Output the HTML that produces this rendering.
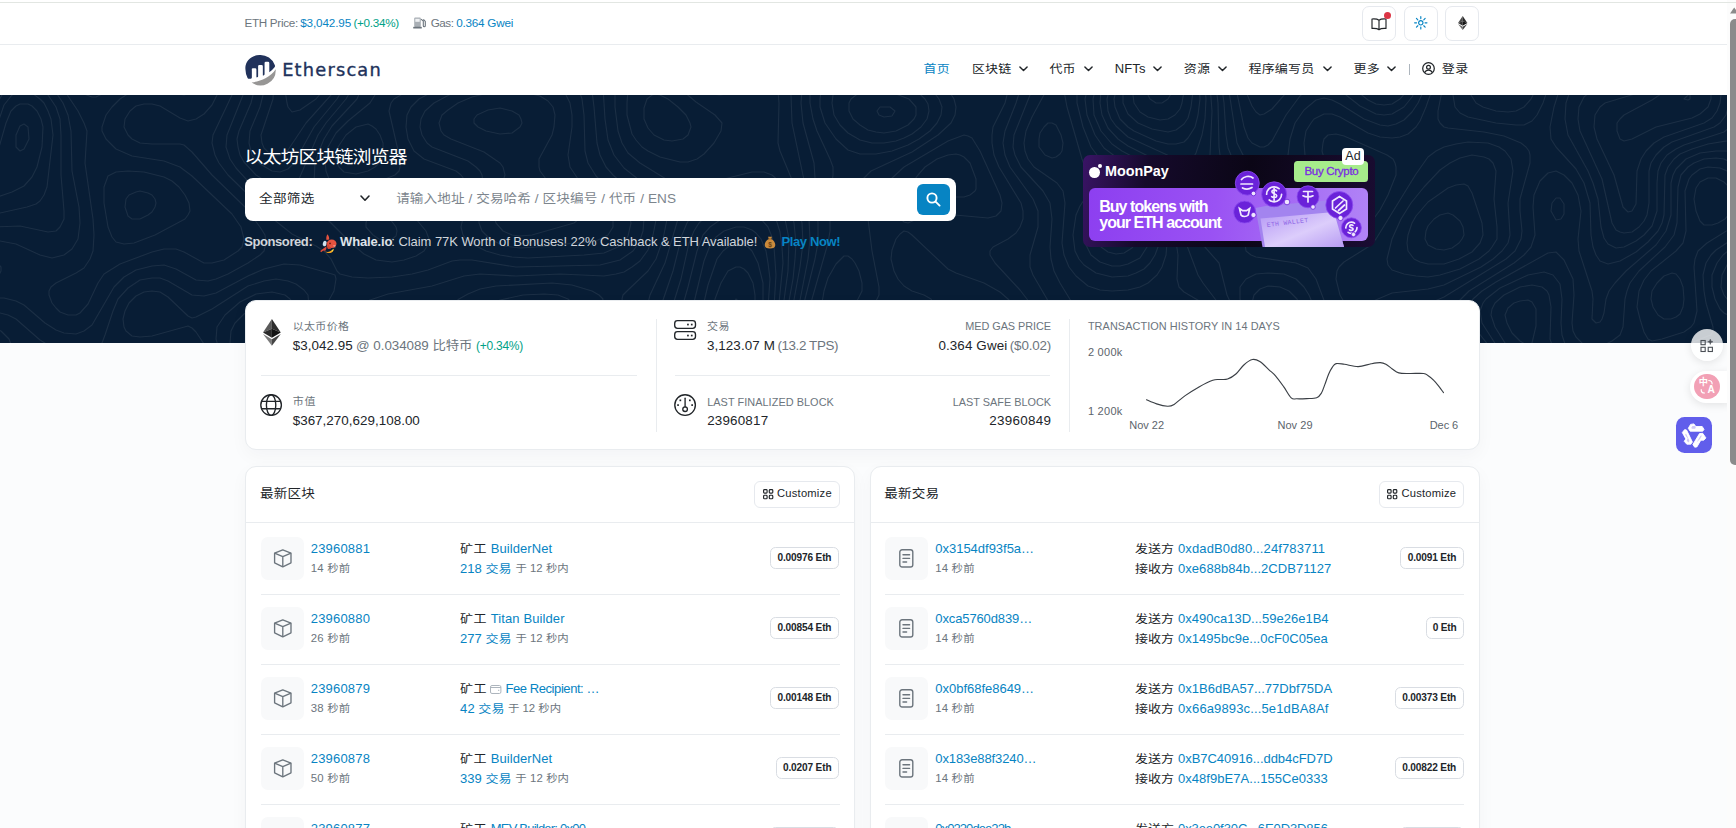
<!DOCTYPE html>
<html lang="zh-CN">
<head>
<meta charset="utf-8">
<title>以太坊区块链浏览器 | Etherscan</title>
<style>
*{box-sizing:border-box;margin:0;padding:0}
html,body{width:1736px;height:828px;overflow:hidden;background:#fbfcfd}
body{position:relative;font-family:"Liberation Sans","Noto Sans CJK SC",sans-serif;font-size:13px;color:#212529;line-height:1}
.abs{position:absolute}
.c{display:inline-block;font-style:normal;transform:scaleY(.9);transform-origin:50% 67%}
.t{position:absolute;white-space:nowrap;line-height:1;font-family:"Liberation Sans","Noto Sans CJK SC",sans-serif}
svg{position:absolute;overflow:visible}
#topline{left:0;top:2px;width:1736px;height:1px;background:#e2e6e2;z-index:2}
#topbar{left:0;top:0;width:1727px;height:45px;background:#fff;border-bottom:1px solid #e9ecef}
#navbar{left:0;top:45px;width:1727px;height:50px;background:#fff}
.tbtn{position:absolute;top:6px;width:34px;height:35px;border:1px solid #e6e9ee;border-radius:7px;background:#fff}
#hero{left:0;top:95px;width:1727px;height:248px;background:#081d35;overflow:hidden}
#search{left:245px;top:178px;width:711px;height:43.3px;background:#fff;border-radius:8px}
#sbtn{left:917px;top:184px;width:33px;height:31px;background:#0784c3;border-radius:6px}
.card{position:absolute;background:#fff;border:1px solid #e9ecef;border-radius:11px;box-shadow:0 6px 18px rgba(8,29,53,.035)}
.hr{position:absolute;height:1px;background:#e9ecef}
.vr{position:absolute;width:1px;background:#e9ecef}
.ibox{position:absolute;width:43px;height:43px;background:#f8f9fa;border-radius:7px}
.badge{position:absolute;height:22px;border:1px solid #d9dde3;border-radius:5.5px;font-size:10.1px;font-weight:bold;color:#212529;line-height:19px;text-align:center;white-space:nowrap;background:#fff;letter-spacing:-.15px}
.cust{position:absolute;top:481px;width:85.5px;height:26.5px;border:1px solid #e6e9ee;border-radius:6px;background:#fff}
#sbar{left:1727px;top:0;width:9px;height:828px;background:#fcfcfc}
#thumb{left:1730px;top:18.5px;width:12px;height:446px;background:#8b8b8b;border-radius:5px}
</style>
</head>
<body>
<div id="topline" class="abs"></div>
<div id="topbar" class="abs"></div>
<div id="navbar" class="abs"></div>

<!-- gas pump -->
<svg style="left:412.5px;top:17px" width="13" height="12" viewBox="0 0 13 12"><rect x="1.2" y="0.6" width="6.6" height="9.4" rx="1" fill="#a9afb5"/><rect x="2.3" y="1.8" width="4.4" height="3" fill="#eef0f2"/><rect x="0.2" y="9.8" width="8.6" height="1.7" rx=".5" fill="#6c757d"/><path d="M8 2.2l2.3 1.9v4.6a1 1 0 0 0 2 0V4.5L10.4 2.4" fill="none" stroke="#6c757d" stroke-width="1.1"/></svg>

<!-- top right buttons -->
<div class="tbtn" style="left:1362px"></div>
<div class="tbtn" style="left:1404px"></div>
<div class="tbtn" style="left:1445px"></div>
<svg style="left:1370.5px;top:17.5px" width="16" height="13" viewBox="0 0 16 13" fill="none" stroke="#212529" stroke-width="1.150" stroke-linejoin="round"><path d="M8 2.2C6.4 1 3.6.8 1 1v9.4c2.6-.2 5.4 0 7 1.3 1.6-1.3 4.4-1.5 7-1.3V1c-2.6-.2-5.4 0-7 1.2zM8 2.2v9.4"/></svg>
<div class="abs" style="left:1383.8px;top:11.8px;width:7.2px;height:7.2px;border-radius:50%;background:#dc3545"></div>
<svg style="left:1413.700px;top:16.300px" width="13.600" height="13.600" viewBox="-7.5 -7.5 15 15" fill="none" stroke="#0784c3" stroke-width="1.300" stroke-linecap="round"><circle r="2.4"/><path d="M0-4.7V-6.8M0 4.7V6.8M-4.7 0H-6.8M4.7 0H6.8M-3.3-3.3L-4.8-4.8M3.3-3.3L4.8-4.8M-3.3 3.3L-4.8 4.8M3.3 3.3L4.8 4.8"/></svg>
<svg style="left:1458px;top:16.4px" width="9.4" height="14" viewBox="0 0 18 27"><path d="M9 0L0 13.6 9 10z" fill="#4a4a4a"/><path d="M9 0l9 13.6L9 10z" fill="#2b2b2b"/><path d="M0 13.6L9 10v8.9z" fill="#2f2f2f"/><path d="M18 13.6L9 10v8.9z" fill="#141414"/><path d="M0 15.2l9 5.3V27z" fill="#6b6b6b"/><path d="M18 15.2l-9 5.3V27z" fill="#3d3d3d"/></svg>

<!-- logo -->
<svg style="left:245.2px;top:54.700px" width="31.1" height="30.4" viewBox="0 0 293.775 293.671"><path fill="#21325b" d="M61.055,139.819a12.45,12.45,0,0,1,12.508-12.452l20.737.068a12.467,12.467,0,0,1,12.467,12.467v78.414c2.336-.692,5.332-1.43,8.614-2.203a10.389,10.389,0,0,0,8.009-10.11V108.735a12.469,12.469,0,0,1,12.467-12.47h20.779a12.47,12.47,0,0,1,12.467,12.47v90.276s5.2-2.106,10.269-4.245a10.408,10.408,0,0,0,6.353-9.577V77.567a12.466,12.466,0,0,1,12.466-12.467h20.779a12.468,12.468,0,0,1,12.467,12.467v88.625c18.014-13.055,36.271-28.758,50.759-47.639a20.926,20.926,0,0,0,3.185-19.537A146.6,146.6,0,0,0,136.337,0C54.996,0-12.181,66.391,1.86,147.716a146.1,146.1,0,0,0,19.5,73.45,18.56,18.56,0,0,0,17.707,9.173c3.931-.346,8.825-.835,14.643-1.518a10.383,10.383,0,0,0,9.209-10.306V139.819"/><path fill="#979695" d="M60.603,265.577A146.808,146.808,0,0,0,293.775,146.838c0-3.381-.157-6.724-.383-10.049-53.642,80-152.686,117.405-232.79,128.793"/></svg>

<!-- nav chevrons -->
<svg class="chev" style="left:1018.7px;top:65.8px" width="9" height="6" viewBox="0 0 9 6" fill="none" stroke="#212529" stroke-width="1.45" stroke-linecap="round" stroke-linejoin="round"><path d="M.9.9l3.6 3.7L8.1.9"/></svg>
<svg class="chev" style="left:1083.7px;top:65.8px" width="9" height="6" viewBox="0 0 9 6" fill="none" stroke="#212529" stroke-width="1.45" stroke-linecap="round" stroke-linejoin="round"><path d="M.9.9l3.6 3.7L8.1.9"/></svg>
<svg class="chev" style="left:1153px;top:65.8px" width="9" height="6" viewBox="0 0 9 6" fill="none" stroke="#212529" stroke-width="1.45" stroke-linecap="round" stroke-linejoin="round"><path d="M.9.9l3.6 3.7L8.1.9"/></svg>
<svg class="chev" style="left:1218.2px;top:65.8px" width="9" height="6" viewBox="0 0 9 6" fill="none" stroke="#212529" stroke-width="1.45" stroke-linecap="round" stroke-linejoin="round"><path d="M.9.9l3.6 3.7L8.1.9"/></svg>
<svg class="chev" style="left:1322.5px;top:65.8px" width="9" height="6" viewBox="0 0 9 6" fill="none" stroke="#212529" stroke-width="1.45" stroke-linecap="round" stroke-linejoin="round"><path d="M.9.9l3.6 3.7L8.1.9"/></svg>
<svg class="chev" style="left:1387.3px;top:65.8px" width="9" height="6" viewBox="0 0 9 6" fill="none" stroke="#212529" stroke-width="1.45" stroke-linecap="round" stroke-linejoin="round"><path d="M.9.9l3.6 3.7L8.1.9"/></svg>
<div class="abs" style="left:1409px;top:64px;width:1px;height:11px;background:#adb5bd"></div>
<svg style="left:1422px;top:62.4px" width="13" height="13" viewBox="0 0 13 13" fill="none" stroke="#212529" stroke-width="1.25"><circle cx="6.5" cy="6.5" r="5.8"/><circle cx="6.5" cy="5.2" r="1.9"/><path d="M2.8 10.6c.7-1.7 2-2.5 3.7-2.5s3 .8 3.7 2.5"/></svg>

<!-- hero -->
<div id="hero" class="abs"><svg class="abs" style="left:0;top:0" width="1727" height="248" viewBox="0 0 1727 248" fill="none" stroke="#ffffff" stroke-opacity=".08" stroke-width="1.15" stroke-linejoin="round"><path d="M737,216 740,212 740,208 736,204 733,208 732,212 734,216 736,217 737,216 M740,236 748,229 752,223 755,212 755,200 753,188 748,178 744,174 740,172 736,172 728,176 721,188 715,204 713,220 716,230 723,236 732,238 740,236 M729,248 736,247 744,244 752,237 760,224 763,208 763,188 758,168 752,156 748,152 740,149 732,150 728,152 723,156 717,164 708,190 701,220 702,232 706,240 716,246 729,248 M725,256 736,255 744,252 755,244 760,237 764,229 768,212 770,184 768,168 766,156 761,144 756,138 752,135 744,132 736,132 724,136 716,142 711,148 704,166 690,224 690,232 691,240 697,248 708,254 725,256 M-80,38 -68,36 -60,34 -52,29 -48,24 -44,16 -38,-12 -33,-24 -24,-43 -12,-60 0,-68 32,-76 37,-80 M741,260 748,257 756,251 762,244 767,236 771,224 774,212 776,180 774,152 772,142 768,132 760,123 752,119 744,119 732,120 720,125 710,132 703,140 697,156 688,192 680,220 678,232 679,240 682,248 688,255 696,259 708,262 720,263 732,262 741,260 M-80,44 -68,43 -56,40 -49,36 -44,32 -37,20 -31,-8 -25,-24 -16,-39 -8,-47 4,-54 20,-57 36,-58 64,-56 72,-56 76,-58 80,-64 82,-80 M1162,8 1168,4 1172,-3 1173,-8 1172,-26 1168,-37 1164,-36 1156,-26 1150,-16 1147,-8 1148,0 1150,4 1156,8 1162,8 M733,268 744,265 752,261 764,251 769,244 774,232 779,208 783,168 782,152 780,137 776,124 771,116 764,109 756,107 740,107 722,112 708,119 699,128 694,136 689,148 681,184 671,216 668,228 668,240 670,248 675,256 684,263 692,267 704,269 720,269 733,268 M-80,50 -68,49 -56,47 -48,43 -40,37 -32,24 -24,-8 -19,-20 -8,-35 4,-43 12,-46 24,-47 44,-45 60,-38 84,-21 94,-20 103,-24 120,-39 128,-43 136,-43 160,-39 168,-40 176,-42 184,-48 196,-61 203,-72 205,-80 M1160,-80 1158,-64 1154,-48 1136,-12 1133,0 1134,8 1140,17 1148,22 1160,25 1168,24 1175,20 1180,14 1182,8 1184,-4 1184,-44 1188,-80 M683,44 688,40 691,32 690,28 686,20 678,12 668,4 660,-0 656,-1 652,0 647,4 644,13 644,24 648,33 654,40 664,45 672,46 683,44 M741,272 752,267 760,262 768,254 774,244 782,220 788,176 789,144 784,119 780,109 773,100 768,96 760,93 744,94 716,102 704,109 692,120 687,128 682,140 673,176 662,208 658,224 658,240 662,252 668,262 676,268 688,273 704,275 724,275 741,272 M140,124 148,120 152,117 155,112 156,108 155,104 152,100 148,98 140,96 136,97 129,100 126,104 125,112 128,121 132,124 140,124 M1532,248 1536,231 1536,214 1532,207 1528,205 1520,206 1514,208 1508,213 1505,220 1507,228 1512,238 1520,246 1528,251 1532,248 M521,236 532,232 540,228 544,224 545,220 544,217 540,215 532,214 524,216 516,220 511,224 509,228 509,232 514,236 521,236 M-80,55 -64,54 -52,52 -44,48 -36,42 -31,36 -27,28 -18,-4 -13,-16 -4,-28 8,-35 24,-38 36,-37 44,-35 52,-30 60,-24 84,-1 92,2 96,2 104,-2 120,-14 132,-19 144,-21 172,-20 184,-24 192,-32 212,-62 217,-72 219,-80 M1153,-80 1151,-64 1148,-52 1143,-40 1125,-8 1123,0 1123,8 1128,19 1138,28 1152,34 1168,37 1176,35 1184,29 1188,23 1191,12 1193,-4 1191,-40 1195,-80 M697,64 704,59 714,48 721,36 722,28 715,20 696,7 683,-4 656,-36 652,-38 648,-38 644,-36 636,-26 631,-16 628,-5 627,8 627,20 632,39 636,45 642,52 648,56 660,62 680,67 688,67 697,64 M134,148 155,140 185,124 188,120 190,116 189,108 185,100 179,92 172,86 164,82 144,77 128,76 116,77 108,81 104,92 104,108 108,132 112,142 116,147 124,149 134,148 M731,280 744,277 756,271 768,262 776,252 781,240 785,228 793,184 795,164 796,148 794,128 791,112 787,100 780,87 772,80 764,77 752,77 712,87 700,93 692,101 684,112 678,124 665,168 650,200 647,212 647,228 651,248 657,260 664,269 676,276 692,281 712,282 731,280 M1718,128 1725,124 1732,116 1733,108 1732,100 1729,92 1724,87 1716,83 1708,83 1700,87 1696,93 1694,104 1696,116 1700,126 1704,130 1712,130 1718,128 M1671,224 1676,222 1680,219 1683,212 1684,204 1683,192 1680,184 1676,179 1672,178 1664,181 1657,188 1652,196 1651,204 1653,212 1658,220 1664,224 1671,224 M1654,324 1653,304 1649,288 1644,277 1636,270 1628,268 1620,268 1592,275 1580,276 1568,272 1560,266 1554,256 1550,244 1551,212 1549,200 1547,196 1542,192 1532,190 1520,192 1504,200 1495,208 1492,214 1491,220 1495,232 1515,264 1538,304 1542,316 1544,324 M515,324 510,284 511,276 513,268 518,260 523,256 554,236 564,228 571,220 572,216 573,212 572,208 568,204 558,200 544,199 523,200 500,205 486,212 479,220 475,228 473,236 470,264 463,304 462,324 M-80,61 -64,60 -52,58 -44,55 -36,50 -30,44 -24,36 -12,-3 -4,-17 4,-24 12,-28 24,-30 36,-28 48,-22 62,-8 78,16 84,28 87,36 85,68 93,124 94,140 93,156 90,164 84,173 76,178 56,188 51,192 49,196 49,200 52,208 56,213 60,217 68,220 76,220 80,218 88,209 98,188 104,179 120,169 152,157 164,154 176,154 184,157 204,168 212,168 224,165 238,156 242,152 244,144 241,132 232,119 192,81 180,72 164,66 132,61 116,54 106,44 102,36 102,32 106,20 112,12 120,4 132,-4 140,-6 152,-6 184,-0 192,-2 196,-4 202,-12 213,-40 226,-64 229,-72 231,-80 M633,-80 630,-60 619,-28 615,-12 615,12 618,36 622,48 628,58 640,68 666,84 672,92 672,100 663,144 656,164 648,176 627,196 623,200 622,204 623,208 635,228 648,260 657,272 668,280 679,284 692,287 708,288 732,286 752,279 768,269 780,255 786,244 789,232 800,172 803,148 802,128 795,92 780,56 778,48 779,8 778,-4 776,-12 772,-17 768,-19 764,-19 756,-16 732,-2 720,0 712,-1 700,-6 692,-12 684,-20 675,-36 668,-56 665,-80 M1148,-80 1146,-64 1141,-48 1119,-12 1116,-4 1114,4 1115,12 1120,24 1128,32 1134,36 1156,46 1168,49 1176,49 1184,47 1188,43 1195,32 1198,20 1200,4 1197,-40 1201,-80 M1662,244 1684,237 1691,232 1694,228 1697,216 1694,172 1695,164 1698,156 1707,148 1733,132 1740,126 1743,120 1745,108 1740,91 1732,80 1727,76 1720,73 1708,72 1700,74 1692,80 1689,84 1685,96 1686,136 1683,148 1676,156 1651,176 1644,185 1639,196 1637,212 1640,224 1644,237 1648,244 1652,246 1662,244 M-80,216 -60,213 -37,204 -5,184 -1,180 1,176 1,172 -6,164 -38,144 -60,133 -80,130 M1659,324 1656,287 1652,268 1648,257 1644,253 1640,252 1600,263 1588,264 1580,263 1572,258 1566,252 1562,240 1561,228 1562,204 1560,189 1553,180 1544,177 1528,180 1500,193 1486,204 1483,208 1480,216 1482,228 1505,264 1521,296 1528,312 1530,324 M522,324 521,288 523,276 527,268 540,256 581,228 595,216 602,208 603,204 599,200 592,196 572,190 552,188 496,191 480,194 468,199 459,204 449,212 442,220 441,224 441,228 451,252 455,272 455,324 M1281,220 1280,215 1276,213 1272,215 1273,220 1276,224 1280,223 1281,220 M360,260 375,252 386,244 400,232 402,228 396,224 380,225 356,230 343,236 336,243 334,248 333,252 336,258 340,261 344,262 352,262 360,260 M943,324 947,280 947,272 944,264 936,258 920,250 904,245 888,242 876,244 868,248 860,255 853,264 850,272 847,284 846,324 M-80,223 -56,220 -16,206 -4,203 4,203 16,206 24,210 45,228 56,235 64,238 76,239 84,236 92,230 114,192 124,182 136,175 152,171 164,170 176,174 196,185 208,186 216,184 228,179 248,168 260,160 264,156 266,148 265,140 260,132 245,112 212,80 192,57 184,50 180,49 152,49 140,48 132,44 128,40 124,32 125,24 130,16 136,11 144,9 152,9 160,11 180,23 188,26 196,24 204,19 212,10 217,0 225,-36 237,-64 241,-80 M618,-80 615,-64 606,-36 603,-24 603,-8 605,24 608,45 614,60 624,73 648,92 652,97 655,104 657,120 653,140 648,155 640,166 632,172 624,177 616,179 604,181 560,179 516,181 480,179 464,181 432,191 388,199 364,207 348,214 336,222 328,231 322,240 320,252 322,260 328,268 340,273 356,272 396,258 408,255 420,254 432,259 440,268 445,280 448,296 449,324 M529,324 529,292 532,280 536,272 543,264 556,254 584,238 600,230 612,229 620,232 628,240 641,264 652,277 668,287 688,293 700,294 716,294 732,292 744,289 756,284 768,276 777,268 784,260 790,248 794,236 808,164 810,144 809,124 804,85 792,28 791,0 792,-24 794,-36 798,-44 816,-68 821,-80 M1143,-80 1141,-64 1135,-48 1114,-16 1109,-4 1107,4 1108,16 1111,24 1116,31 1128,42 1176,64 1188,67 1192,65 1196,58 1202,40 1205,24 1206,4 1203,-36 1206,-80 M1480,-80 1478,-60 1470,-16 1469,-8 1471,0 1476,8 1483,12 1496,16 1508,17 1516,16 1524,12 1531,4 1537,-8 1543,-24 1546,-40 1547,-80 M-80,66 -52,64 -40,60 -32,55 -25,48 -20,40 -8,4 0,-10 8,-17 16,-21 24,-22 36,-19 48,-12 55,-4 63,8 68,20 71,36 72,76 79,112 80,128 78,144 72,154 64,160 52,163 40,160 16,149 -16,143 -60,127 -80,123 M368,76 375,72 379,68 382,64 383,56 383,48 380,40 376,34 372,31 368,29 364,30 356,32 346,40 338,52 336,64 339,72 344,77 356,79 368,76 M970,100 975,96 976,94 976,84 970,68 964,62 960,60 956,59 948,60 937,64 925,72 918,80 915,84 914,88 916,93 920,97 928,100 952,102 964,102 970,100 M1663,324 1662,280 1663,272 1665,264 1668,260 1676,254 1708,241 1711,240 1713,236 1713,232 1706,208 1704,196 1703,180 1706,168 1711,160 1716,155 1748,134 1753,128 1755,124 1756,116 1755,108 1749,92 1744,80 1737,72 1732,68 1724,64 1716,63 1704,64 1694,68 1688,72 1681,80 1678,92 1677,128 1674,140 1665,152 1639,176 1630,188 1627,196 1625,204 1623,232 1620,240 1612,246 1604,250 1592,251 1584,250 1576,242 1573,236 1572,228 1574,200 1573,184 1564,165 1556,157 1548,158 1496,187 1482,196 1473,204 1469,212 1468,216 1469,224 1474,232 1493,256 1502,272 1516,304 1520,324 M1561,124 1564,119 1564,109 1560,103 1556,103 1552,108 1551,116 1556,125 1561,124 M1292,252 1296,250 1300,244 1303,232 1302,216 1297,204 1289,196 1280,192 1268,191 1260,194 1254,200 1252,208 1254,220 1260,232 1268,243 1276,250 1284,253 1292,252 M949,324 950,312 953,296 957,284 963,272 972,264 997,252 1002,248 1006,240 1007,236 1005,228 1001,220 992,212 980,208 972,210 968,212 964,217 952,236 944,241 932,242 900,234 888,233 872,237 860,244 849,256 843,272 841,288 842,324 M599,-80 597,-68 590,-48 588,-36 594,12 597,48 600,60 606,72 613,80 635,100 642,112 644,124 643,136 639,148 633,156 620,165 600,170 516,172 472,165 460,165 452,166 428,175 412,179 392,182 368,183 352,182 340,179 337,176 331,164 324,156 316,151 292,139 272,123 228,80 219,68 215,60 212,48 213,40 232,0 237,-36 247,-64 250,-80 M364,-80 367,-56 375,-12 375,0 370,8 348,26 336,38 328,52 325,64 326,76 329,84 336,89 348,92 364,90 385,84 395,80 399,76 400,72 400,64 389,16 391,8 394,4 404,-2 418,-8 468,-26 511,-40 524,-46 533,-52 540,-60 542,-68 544,-80 M536,324 537,292 540,284 544,276 552,267 564,258 580,249 596,243 608,242 616,245 624,253 640,276 648,284 664,293 688,300 712,301 736,298 756,290 777,276 789,264 797,248 805,204 815,164 818,148 818,128 814,68 803,28 801,8 803,-16 809,-32 816,-41 824,-47 832,-50 840,-51 848,-48 873,-36 888,-31 908,-26 956,-19 968,-13 980,-1 984,-1 988,-5 991,-16 991,-40 995,-80 M1139,-80 1136,-64 1132,-52 1124,-38 1107,-16 1101,-4 1100,8 1102,20 1108,33 1118,44 1128,51 1156,65 1171,76 1180,88 1192,114 1200,126 1208,133 1216,136 1224,135 1232,128 1236,120 1236,112 1232,100 1213,72 1210,60 1212,16 1208,-36 1210,-80 M1459,-80 1460,-48 1459,-32 1453,0 1455,12 1460,18 1468,22 1496,28 1516,30 1524,30 1532,26 1537,20 1543,8 1551,-16 1558,-40 1561,-60 1562,-80 M-80,73 -60,71 -48,69 -36,65 -28,61 -20,53 -15,44 -4,11 4,-4 9,-8 16,-12 24,-13 32,-12 40,-8 48,0 56,12 60,24 61,40 61,80 64,116 64,124 60,132 56,136 48,137 20,131 -8,132 -20,131 -60,119 -80,116 M917,124 932,120 944,119 988,123 996,121 1001,116 1002,108 1000,100 980,56 972,43 968,41 964,40 948,46 904,72 891,84 888,88 887,96 888,104 892,113 896,119 904,127 908,128 917,124 M1800,178 1768,208 1752,219 1740,222 1732,222 1724,218 1720,214 1715,204 1712,192 1712,180 1717,168 1723,160 1728,156 1744,148 1767,140 1772,136 1773,132 1769,120 1753,80 1744,64 1736,58 1728,56 1716,56 1700,58 1686,64 1676,74 1673,80 1671,88 1671,120 1666,136 1656,150 1626,176 1615,188 1609,196 1606,204 1604,218 1602,224 1600,227 1596,228 1592,224 1593,204 1592,196 1579,156 1578,144 1581,116 1578,100 1572,88 1564,80 1556,76 1548,78 1540,86 1534,100 1533,112 1535,140 1531,152 1524,160 1514,168 1469,196 1457,208 1453,216 1453,220 1457,228 1480,250 1488,260 1495,272 1507,300 1510,312 1512,324 M442,108 445,104 446,100 444,94 436,90 428,90 425,92 424,96 428,104 436,109 442,108 M955,324 956,312 959,300 964,290 968,284 980,275 1014,260 1022,252 1025,240 1023,228 1015,212 1008,204 1000,197 984,188 956,178 948,174 912,140 908,137 904,136 900,139 896,144 892,155 891,164 894,176 898,184 904,191 912,196 924,200 931,204 933,208 933,216 930,220 924,222 900,219 888,221 880,223 860,233 847,244 839,256 835,272 837,324 M-80,230 -56,227 -16,218 0,218 8,220 16,224 40,245 48,250 64,254 88,254 96,252 102,248 105,240 113,216 118,204 128,193 140,185 152,183 160,183 168,186 192,200 204,201 216,198 248,181 264,174 284,169 300,170 332,179 335,180 336,184 334,196 316,229 311,244 311,252 312,260 316,267 320,272 332,279 344,281 356,279 400,268 412,267 420,269 430,276 438,288 441,304 443,324 M1334,324 1336,288 1335,276 1333,268 1322,248 1314,212 1309,200 1304,192 1296,184 1284,179 1268,178 1256,179 1246,184 1240,192 1240,204 1244,220 1252,236 1281,284 1283,296 1280,324 M357,-80 363,-28 362,-8 357,4 332,31 324,44 319,56 315,68 314,88 316,96 320,105 324,110 328,111 336,110 368,101 380,100 388,101 396,104 406,112 426,136 429,144 429,148 424,156 416,161 404,165 392,167 376,165 364,159 352,149 324,121 320,119 296,117 288,115 276,108 246,84 236,73 230,64 226,52 227,40 243,0 248,-36 256,-67 258,-80 M1115,324 1111,300 1106,288 1101,280 1096,274 1088,268 1056,257 1049,252 1045,244 1036,220 1030,208 1020,195 995,168 990,160 990,156 993,152 1008,144 1016,138 1020,132 1023,124 1023,116 1021,108 999,72 994,60 992,48 992,40 993,32 1005,8 1009,-8 1011,-80 M1134,-80 1132,-64 1127,-52 1120,-41 1100,-16 1096,-8 1093,4 1094,20 1101,36 1112,49 1122,56 1152,72 1165,84 1173,96 1188,128 1196,142 1219,168 1227,200 1251,252 1256,264 1259,276 1259,288 1256,296 1243,316 1239,324 M1429,-80 1432,-72 1444,-52 1447,-40 1446,-24 1438,16 1438,24 1440,28 1444,32 1448,33 1484,37 1504,41 1521,48 1526,52 1529,56 1530,60 1530,68 1520,104 1520,116 1522,136 1521,144 1515,156 1506,164 1444,202 1428,209 1404,212 1392,215 1380,222 1364,234 1352,238 1344,237 1340,235 1334,228 1328,216 1316,184 1308,173 1296,168 1256,162 1251,160 1246,156 1245,148 1252,120 1251,108 1245,96 1224,69 1220,60 1219,52 1218,8 1213,-36 1215,-80 M1738,-80 1738,-28 1741,-8 1748,32 1748,40 1739,44 1708,49 1692,54 1680,59 1674,64 1668,72 1665,80 1664,120 1662,128 1658,136 1648,147 1636,157 1620,166 1608,169 1600,166 1596,160 1593,152 1591,140 1590,108 1584,88 1576,74 1556,52 1551,44 1550,32 1554,12 1564,-20 1572,-36 1576,-40 1580,-41 1584,-41 1608,-29 1624,-25 1640,-26 1652,-33 1660,-41 1665,-52 1668,-64 1669,-80 M544,324 546,296 548,288 552,280 559,272 568,265 580,259 592,255 604,254 612,257 620,264 636,285 652,296 680,306 704,310 724,309 736,306 748,301 777,284 799,264 805,256 808,248 812,204 828,148 830,136 830,104 833,80 833,72 830,64 817,36 813,24 810,8 810,-4 814,-16 820,-26 828,-32 840,-36 852,-34 926,-16 938,-12 949,-4 954,4 956,12 955,20 951,28 938,40 912,57 871,76 863,84 862,88 862,96 868,124 872,156 879,192 879,200 875,208 872,212 848,230 837,240 831,248 827,256 825,268 831,304 832,324 M584,160 528,163 512,162 500,160 486,156 476,151 466,144 463,140 461,132 468,100 467,88 461,80 456,76 424,64 414,56 408,44 406,32 407,20 411,12 419,4 434,-4 464,-16 484,-22 532,-30 548,-32 560,-30 568,-25 576,-14 582,4 584,20 585,56 588,68 596,81 624,110 629,120 631,128 628,141 624,147 618,152 604,158 584,160 M-80,81 -60,80 -44,76 -28,70 -20,64 -13,56 -9,48 4,10 12,0 20,-3 24,-4 32,-2 40,4 44,8 48,16 51,24 53,40 47,92 44,100 40,106 36,109 27,112 0,118 -16,120 -28,119 -64,109 -80,107 M1359,136 1364,133 1372,126 1380,115 1388,100 1396,80 1396,72 1395,68 1393,64 1387,60 1344,41 1336,39 1328,40 1324,44 1323,48 1322,56 1331,88 1334,128 1336,132 1339,136 1344,138 1352,138 1359,136 M1748,209 1736,210 1732,208 1727,204 1724,200 1721,192 1722,180 1728,168 1736,162 1748,158 1760,158 1768,162 1772,167 1774,172 1774,180 1771,188 1766,196 1757,204 1748,209 M220,324 220,296 217,276 208,255 196,237 192,233 188,231 152,241 140,242 132,241 126,236 124,232 123,224 125,216 129,208 136,201 144,197 152,196 160,197 168,202 188,221 192,223 196,222 212,214 248,191 264,186 276,184 288,186 296,189 304,195 308,200 309,212 303,240 303,252 304,260 307,268 316,278 328,285 340,287 356,286 396,277 408,277 416,280 424,285 431,296 435,308 436,324 M-80,238 -60,237 -24,232 -12,232 1,236 9,244 12,252 10,260 -12,279 -23,292 -29,308 -31,324 M1344,324 1346,308 1350,292 1355,280 1362,272 1372,266 1400,256 1432,238 1440,237 1452,239 1464,245 1476,255 1484,264 1491,276 1498,292 1503,308 1505,324 M349,-80 355,-28 354,-16 353,-8 346,4 326,28 318,40 299,84 292,91 284,93 272,90 256,80 244,67 240,60 238,52 237,44 239,36 251,8 254,-4 257,-36 264,-68 266,-80 M1127,324 1126,312 1122,300 1112,276 1100,262 1070,244 1062,236 1047,204 1033,180 1030,172 1030,160 1038,132 1038,116 1033,104 1010,72 1005,60 1003,48 1005,36 1016,8 1021,-8 1023,-24 1024,-80 M1130,-80 1127,-64 1122,-52 1113,-40 1095,-20 1088,-8 1085,4 1087,20 1095,40 1104,53 1116,62 1148,79 1156,86 1164,96 1171,108 1177,124 1198,180 1203,188 1228,221 1242,248 1247,268 1248,276 1246,284 1240,296 1220,316 1215,324 M1415,-80 1419,-68 1432,-48 1435,-40 1437,-32 1436,-20 1433,-8 1426,12 1420,26 1416,32 1408,39 1400,42 1392,43 1380,42 1368,38 1340,22 1332,19 1324,19 1314,24 1311,28 1306,36 1304,48 1305,60 1315,92 1316,100 1314,112 1310,128 1304,138 1296,144 1288,146 1280,145 1273,140 1270,132 1268,112 1263,100 1258,92 1236,69 1231,60 1228,53 1226,40 1224,8 1218,-36 1219,-80 M1733,-80 1732,-32 1736,12 1736,20 1733,28 1730,32 1724,37 1684,50 1676,54 1667,60 1661,68 1658,76 1657,88 1657,116 1652,131 1644,140 1636,146 1624,152 1616,153 1608,149 1604,143 1601,132 1598,104 1593,88 1588,76 1568,40 1565,24 1566,8 1570,-4 1575,-12 1580,-18 1584,-20 1592,-21 1616,-17 1632,-17 1644,-20 1656,-27 1665,-36 1671,-48 1673,-60 1674,-80 M892,56 876,59 860,59 848,55 836,44 825,28 820,12 820,4 821,-4 824,-11 828,-16 836,-22 844,-24 864,-23 914,-12 928,-6 936,0 939,4 942,12 941,20 937,28 930,36 919,44 908,50 892,56 M536,152 520,153 504,151 490,144 482,136 479,128 479,120 483,88 482,80 480,76 476,72 468,66 432,52 427,48 422,40 420,32 421,24 425,16 434,8 449,0 469,-8 484,-12 504,-15 528,-16 544,-15 556,-11 564,-4 570,8 572,20 572,32 568,60 570,72 578,84 603,108 609,116 613,124 613,132 608,140 596,146 536,152 M-8,104 -20,106 -32,105 -43,100 -47,96 -45,92 -24,81 -12,72 -6,64 -2,56 6,28 11,16 16,11 20,9 28,9 32,11 37,16 41,24 43,32 42,52 37,72 32,82 24,91 12,97 -8,104 M1356,212 1348,210 1344,207 1340,200 1336,184 1337,176 1339,172 1344,167 1368,152 1376,144 1416,79 1428,62 1436,56 1444,52 1456,49 1468,47 1488,48 1499,52 1505,56 1511,64 1513,76 1508,108 1510,140 1508,148 1502,156 1493,164 1481,172 1444,190 1428,194 1392,198 1364,210 1356,212 M392,144 384,145 379,144 373,140 366,132 366,128 367,124 371,120 376,119 384,120 390,124 396,132 397,136 396,141 392,144 M832,224 828,225 823,220 822,208 824,196 828,183 836,169 844,161 848,161 852,164 855,168 859,176 862,188 862,196 858,204 852,212 840,221 832,224 M225,324 225,284 223,268 216,244 217,232 225,220 240,207 256,199 272,197 285,200 290,204 293,208 296,220 294,248 296,260 301,272 312,283 324,290 340,293 352,293 388,286 400,285 408,287 417,292 424,300 428,312 430,324 M1352,324 1353,312 1356,300 1360,292 1368,282 1380,274 1428,252 1436,249 1444,248 1456,250 1464,254 1472,260 1480,269 1487,280 1493,296 1497,312 1498,324 M340,-80 347,-32 347,-20 344,-8 337,4 314,32 294,68 288,74 280,77 272,76 260,69 252,60 249,48 250,36 260,12 263,0 266,-36 274,-80 M1126,-80 1123,-64 1117,-52 1108,-41 1086,-20 1079,-8 1077,0 1077,8 1083,32 1091,52 1100,64 1108,69 1140,83 1151,92 1158,100 1167,116 1175,140 1178,160 1177,184 1179,192 1184,197 1208,211 1220,222 1228,234 1233,244 1238,256 1239,264 1238,276 1235,284 1230,292 1220,301 1204,310 1192,314 1176,319 1164,321 1152,317 1140,306 1132,293 1112,253 1104,243 1082,224 1060,188 1054,176 1051,164 1050,152 1052,124 1050,108 1043,96 1021,72 1015,60 1013,52 1014,40 1030,0 1034,-16 1035,-80 M1404,-80 1408,-68 1424,-44 1427,-36 1428,-28 1427,-16 1424,-5 1418,8 1412,17 1404,25 1396,29 1388,31 1380,30 1364,24 1340,9 1332,5 1324,3 1316,5 1304,15 1295,28 1290,44 1286,76 1284,81 1280,83 1268,79 1252,69 1243,60 1237,48 1224,-36 1224,-80 M1728,-80 1726,-36 1728,4 1728,12 1726,20 1720,28 1714,32 1672,47 1664,52 1656,60 1651,68 1649,76 1649,108 1647,120 1644,126 1639,132 1632,137 1624,138 1620,137 1616,135 1612,128 1602,84 1580,36 1578,24 1579,12 1584,2 1592,-5 1600,-7 1628,-8 1640,-11 1652,-16 1663,-24 1673,-36 1677,-48 1680,-60 1680,-80 M884,48 872,48 860,45 848,38 840,30 834,20 832,8 833,0 839,-8 847,-12 856,-14 884,-12 900,-9 912,-5 921,0 925,4 928,9 929,16 927,24 921,32 912,39 904,43 896,46 884,48 M532,140 520,141 512,140 503,136 496,128 494,120 494,112 505,80 503,72 500,68 484,57 451,44 444,40 441,36 439,28 442,20 448,15 458,8 472,2 484,-1 496,-3 512,-3 528,-2 540,1 548,6 553,12 555,20 554,32 552,40 539,64 539,72 540,76 546,84 576,112 580,120 579,124 574,128 532,140 M20,56 16,52 16,40 20,31 24,29 28,32 29,44 24,54 20,56 M1440,180 1428,182 1416,181 1404,179 1392,175 1388,170 1387,164 1392,144 1401,124 1411,108 1424,92 1440,75 1450,68 1460,63 1472,60 1484,62 1489,64 1493,68 1496,76 1494,104 1497,132 1497,144 1492,152 1489,156 1479,164 1460,174 1440,180 M230,324 232,284 230,248 231,236 235,228 244,219 256,212 264,210 272,211 280,217 284,228 286,252 289,264 296,276 308,288 320,295 336,300 352,299 384,293 396,293 404,295 412,300 416,304 420,312 422,324 M331,-80 340,-36 340,-24 337,-12 331,0 306,28 288,55 280,60 276,60 268,57 264,53 262,48 261,40 273,4 275,-36 283,-80 M1121,-80 1119,-68 1112,-54 1100,-41 1072,-20 1066,-12 1064,-4 1067,12 1082,64 1085,72 1092,78 1128,86 1136,90 1144,95 1156,110 1161,120 1165,132 1167,148 1166,160 1162,172 1157,180 1148,188 1140,192 1128,195 1112,196 1100,195 1088,191 1076,181 1069,172 1064,160 1062,148 1065,108 1063,96 1057,88 1034,72 1028,64 1025,56 1024,48 1026,36 1032,22 1046,-4 1049,-12 1049,-20 1046,-52 1045,-80 M1393,-80 1398,-68 1416,-44 1419,-36 1421,-28 1420,-20 1417,-8 1412,2 1404,12 1392,19 1384,20 1376,19 1360,11 1332,-11 1324,-14 1320,-13 1312,-10 1300,1 1286,20 1272,46 1268,50 1264,52 1260,52 1252,48 1248,43 1244,32 1230,-36 1229,-80 M1721,-80 1719,-40 1721,0 1720,8 1717,16 1712,23 1704,28 1664,42 1654,48 1646,56 1641,64 1637,76 1636,109 1632,116 1628,117 1623,112 1614,80 1597,44 1594,32 1595,20 1600,12 1605,8 1648,-5 1660,-12 1672,-23 1681,-36 1685,-48 1687,-60 1687,-80 M896,36 884,38 876,37 868,35 860,30 853,24 849,16 849,8 851,4 856,0 860,-2 876,-4 896,-1 909,4 916,12 916,20 914,24 908,30 896,36 M512,38 500,39 486,36 478,32 474,28 474,24 477,20 488,15 500,13 512,16 519,20 521,24 522,28 520,32 512,38 M1444,169 1428,169 1420,167 1414,164 1408,156 1407,148 1408,140 1412,128 1416,121 1428,107 1448,93 1456,90 1464,89 1468,91 1472,98 1482,128 1483,140 1480,148 1472,157 1459,164 1444,169 M1196,301 1176,302 1164,300 1156,297 1148,292 1144,287 1136,272 1132,256 1133,248 1136,240 1148,227 1164,218 1176,215 1184,214 1200,218 1208,222 1216,229 1224,240 1228,248 1231,264 1231,272 1227,280 1221,288 1216,292 1208,297 1196,301 M236,324 237,308 245,248 248,241 251,236 256,233 260,232 264,233 268,237 278,264 285,276 297,288 312,299 328,305 340,307 380,301 396,302 402,304 408,309 412,316 414,324 M316,-80 318,-72 330,-40 332,-28 331,-20 326,-8 316,4 300,15 292,17 288,12 287,8 284,-12 284,-28 287,-48 297,-80 M1380,-80 1381,-76 1386,-68 1407,-44 1412,-32 1413,-24 1411,-12 1407,-4 1400,4 1392,9 1384,10 1376,9 1368,5 1352,-8 1332,-36 1328,-40 1324,-40 1320,-39 1312,-32 1272,14 1264,19 1260,20 1256,17 1252,11 1244,-8 1238,-28 1234,-48 1234,-80 M1711,-80 1708,-61 1705,-48 1711,-8 1711,4 1708,12 1700,19 1692,23 1656,32 1632,44 1624,46 1620,44 1617,36 1617,28 1620,24 1624,20 1652,5 1664,-3 1682,-20 1697,-40 1701,-52 1698,-80 M892,21 884,22 879,20 877,16 880,12 890,12 895,16 892,21 M1056,62 1052,63 1045,60 1039,52 1039,44 1040,38 1044,32 1048,28 1052,28 1056,30 1061,40 1063,48 1062,56 1060,59 1056,62 M1128,181 1112,182 1096,178 1084,170 1079,164 1075,156 1073,140 1076,120 1080,111 1084,105 1089,100 1096,97 1104,94 1116,94 1132,98 1140,103 1145,108 1151,116 1155,124 1157,132 1158,144 1158,152 1155,160 1150,168 1144,174 1136,178 1128,181 M1452,153 1444,155 1436,154 1428,150 1425,144 1426,136 1428,131 1434,124 1440,120 1448,118 1453,120 1460,126 1463,132 1464,140 1462,144 1459,148 1452,153 M1204,289 1192,292 1176,291 1164,287 1156,280 1149,268 1149,256 1154,244 1162,236 1176,228 1184,226 1192,226 1204,230 1215,240 1222,252 1223,260 1223,268 1220,275 1217,280 1212,284 1204,289 M1688,5 1684,4 1688,-0 1690,0 1690,4 1688,5 M1128,169 1120,171 1112,171 1100,167 1091,160 1085,148 1084,136 1088,122 1096,112 1108,106 1120,105 1132,108 1141,116 1147,128 1149,140 1147,152 1140,163 1128,169 M1196,281 1184,281 1176,278 1168,272 1164,264 1165,256 1169,248 1176,242 1184,239 1196,238 1204,242 1210,248 1214,256 1214,264 1210,272 1204,278 1196,281 M1124,158 1116,159 1108,157 1101,152 1097,144 1097,136 1100,128 1104,123 1112,118 1120,117 1128,120 1133,124 1137,132 1138,140 1136,148 1132,153 1124,158"/></svg></div>
<div id="search" class="abs"></div>
<svg style="left:359.6px;top:195.4px" width="10" height="7" viewBox="0 0 10 7" fill="none" stroke="#212529" stroke-width="1.6" stroke-linecap="round" stroke-linejoin="round"><path d="M1 1l4 4.2L9 1"/></svg>
<div id="sbtn" class="abs"></div>
<svg style="left:926px;top:192px" width="15" height="15" viewBox="0 0 15 15" fill="none" stroke="#fff" stroke-width="1.9" stroke-linecap="round"><circle cx="6" cy="6" r="4.6"/><path d="M9.6 9.6l4 4"/></svg>
<!-- whale mascot -->
<svg style="left:314px;top:230px" width="30" height="26" viewBox="0 0 30 26"><path d="M13.500 4.300c1.300 1.500 1.900 3.300 1.700 5.300l-2.700.3c-.500-1.900-.100-3.800 1-5.600z" fill="#e5533f"/><ellipse cx="10.700" cy="13.600" rx="1.900" ry="2.800" fill="#cfe2ee" transform="rotate(18 10.700 13.600)"/><path d="M12.500 16.300c-1.800 1.400-4 3-6.300 4.600l.9 1.300c1.100-.900 2.100-1.500 3.100-1.900l.6 1.200 1.500-2.500z" fill="#dc4a38"/><ellipse cx="17.700" cy="13.800" rx="4.800" ry="4.200" fill="#e5533f"/><path d="M13 11.500c1.200 2.800 2.300 5.100 4.200 7.300l-3.300.2c-1.200-2.200-1.600-4.700-.9-7.500z" fill="#d3432f"/><circle cx="16" cy="13.400" r=".85" fill="#5a160e"/><path d="M19.300 15.600h2.200M19.600 16.900h1.900" stroke="#f4c8c0" stroke-width=".6"/><path d="M11 21.500c2.900.9 6 .3 8.400-2.700.7 2.400-1.500 4.500-4.400 4.300-1.700-.100-3.200-.700-4-1.600z" fill="#f6a21e"/><path d="M17.400 20.700c.9-.400 1.600-1.100 2-1.900.3 1.100-.300 2.300-1.400 2.900z" fill="#f8e24a"/></svg>
<!-- money bag -->
<svg style="left:763.5px;top:235.500px" width="12" height="13" viewBox="0 0 12 13"><path d="M4 .8h4l-.9 2.300c2.600 1.200 4.200 3.600 4.200 5.900 0 2.300-1.900 3.600-5.300 3.600S.700 11.300.700 9c0-2.300 1.600-4.700 4.200-5.900z" fill="#c98a3c"/><path d="M4.300 2.900h3.400" stroke="#8a5a22" stroke-width=".9"/><text x="6" y="10.600" font-size="6.500" font-weight="bold" text-anchor="middle" fill="#6b4313" font-family="Liberation Sans,sans-serif">$</text></svg>

<!-- AD -->
<div class="abs" id="ad" style="left:1083px;top:155.200px;width:292px;height:92px;border-radius:7px;overflow:hidden;background:linear-gradient(100deg,#3a1466 0%,#150a2b 22%,#0b0616 55%,#1a0c33 100%)">
  <div class="abs" style="left:6.300px;top:33px;width:278.600px;height:52.700px;border-radius:6px;background:linear-gradient(95deg,#8d3ff0 0%,#9a52f3 45%,#b184f6 100%)"></div>
  <!-- wallet card -->
  <svg style="left:0;top:0" width="292" height="92" viewBox="0 0 292 92">
    <defs><linearGradient id="wg" x1="0" y1="0" x2="1" y2="1"><stop offset="0" stop-color="#b598f5"/><stop offset=".55" stop-color="#dccdfb"/><stop offset="1" stop-color="#b79cf3"/></linearGradient></defs>
    <path d="M172.500 53l10-2 66.500-6 12 47h-81.500z" fill="#a384ef"/>
    <path d="M177.500 63.500l73.500-6.500 10 35h-79z" fill="url(#wg)"/>
    <text x="184" y="72" font-size="6.500" fill="#8f66e6" font-family="Liberation Mono,monospace" transform="rotate(-7 184 72)" letter-spacing=".3">ETH WALLET</text>
    <g fill="#6a22d9" stroke="#8d4cf0" stroke-width=".8">
      <circle cx="164.300" cy="28.200" r="12"/><circle cx="191.100" cy="39.300" r="12.500"/><circle cx="225" cy="41.800" r="11"/><circle cx="256.300" cy="50" r="13.500"/><circle cx="161.600" cy="57.100" r="11"/><circle cx="268.400" cy="72.800" r="10"/>
    </g>
    <g fill="none" stroke="#f1e9ff" stroke-width="1.700" stroke-linecap="round">
      <path d="M158.500 24.500c2-3 8-4.500 11.500-1.500M158 29h11.500M159.500 33c3 1.500 7 1.200 9.500-.5"/>
      <circle cx="191.100" cy="39.300" r="7.500" stroke-dasharray="17 6.500"/>
      <path d="M193.500 35.800c-1.500-1.400-4.600-1-4.600 1 0 2.400 4.800 1.400 4.800 3.900 0 2-3.300 2.500-5 1M191.100 33.400v11.800"/>
      <path d="M220.500 36.500h9M225 36.500V47M220 40.800c2.500 1.500 7.500 1.500 10 0"/>
      <path d="M249.500 46l7-4.500 7 4.500v8l-7 4.500-7-4.500zM252.500 53l7.500-7M255.500 55.500l6-5.500"/>
      <path d="M156.500 53.500l1.500 6.500c1.500 2 5.500 2 7.200 0l1.500-6.500-3.200 2.200h-3.800z"/>
      <circle cx="268.400" cy="72.800" r="5.600" stroke-dasharray="12 5"/>
      <path d="M270 70.500c-1-1-3.400-.8-3.400.8 0 1.700 3.500 1 3.500 2.800 0 1.400-2.400 1.800-3.600.7"/>
    </g>
    <g fill="#efe6ff" stroke="#6a22d9" stroke-width=".8"><circle cx="170.500" cy="38.500" r="2.300"/><circle cx="204" cy="47" r="2.800"/><circle cx="230" cy="52" r="2.300"/><circle cx="257.500" cy="63" r="2.600"/><circle cx="170.500" cy="60" r="2.600"/><circle cx="270.500" cy="79.500" r="2.200"/></g>
  </svg>
  <div class="abs" style="left:211.300px;top:5.800px;width:73.600px;height:21.500px;border-radius:3.500px;background:#a6ec8b"></div>
  <div class="abs" style="left:6.300px;top:12.300px;width:10.800px;height:10.800px;border-radius:50%;background:#fff"></div>
  <div class="abs" style="left:15.300px;top:8.600px;width:3.800px;height:3.800px;border-radius:50%;background:#fff"></div>
  <span class="t" style="left:22px;top:9.300px;font-size:14.400px;font-weight:bold;color:#fff;letter-spacing:-.05px">MoonPay</span>
  <span class="t" style="left:221.500px;top:10.700px;font-size:11.500px;color:#7a2be0;letter-spacing:-.3px;-webkit-text-stroke:.3px #7a2be0">Buy Crypto</span>
  <span class="t" style="left:16.200px;top:43.500px;font-size:16px;font-weight:bold;color:#fff;letter-spacing:-.95px;line-height:16.100px;white-space:pre">Buy tokens with
your ETH account</span>
</div>
<div class="abs" style="left:1341.600px;top:148px;width:22.500px;height:17px;border-radius:4px;background:#fff"></div>
<span class="t" style="left:1345.300px;top:150.300px;font-size:12.500px;color:#212529">Ad</span>

<!-- stats card -->
<div class="card" style="left:245px;top:299.500px;width:1235px;height:150.500px"></div>
<svg style="left:262.800px;top:319px" width="17.800" height="26.700" viewBox="0 0 18 27"><path d="M9 0L0 13.600 9 9.800z" fill="#5a5a5a"/><path d="M9 0l9 13.600L9 9.800z" fill="#2e2e2e"/><path d="M0 13.600L9 9.800v9.100z" fill="#2a2a2a"/><path d="M18 13.600L9 9.800v9.100z" fill="#131313"/><path d="M0 15.300l9 5.300V27z" fill="#7a7a7a"/><path d="M18 15.300l-9 5.300V27z" fill="#454545"/></svg>
<svg style="left:259.800px;top:393.700px" width="22.200" height="22.200" viewBox="-11.100 -11.100 22.200 22.200" fill="none" stroke="#212529" stroke-width="1.350"><circle r="10.300"/><ellipse rx="4.700" ry="10.300"/><path d="M-9.700-3.650H9.700M-9.700 3.650H9.700"/></svg>
<svg style="left:674.300px;top:319.500px" width="22.200" height="20.200" viewBox="0 0 22.200 20.200" fill="none" stroke="#212529" stroke-width="1.350"><rect x=".7" y=".7" width="20.800" height="7.700" rx="2.800"/><rect x=".7" y="11.700" width="20.800" height="7.700" rx="2.800"/><g fill="#212529" stroke="none"><rect x="13.100" y="3.700" width="1.700" height="1.700"/><rect x="16.900" y="3.700" width="1.700" height="1.700"/><rect x="13.100" y="14.700" width="1.700" height="1.700"/><rect x="16.900" y="14.700" width="1.700" height="1.700"/></g></svg>
<svg style="left:674.200px;top:393.700px" width="22.200" height="22.200" viewBox="-11.100 -11.100 22.200 22.200" fill="none" stroke="#212529" stroke-width="1.350"><circle r="10.300"/><circle cy="4.100" r="2.300"/><path d="M0 1.800V-6.800" stroke-linecap="round"/><g fill="#212529" stroke="none"><rect x="-5.600" y="-5.600" width="1.700" height="1.700"/><rect x="3.900" y="-5.600" width="1.700" height="1.700"/><rect x="-7.900" y="-.85" width="1.700" height="1.700"/><rect x="6.200" y="-.85" width="1.700" height="1.700"/></g></svg>
<div class="hr" style="left:260.800px;top:374.600px;width:376.500px"></div>
<div class="hr" style="left:674.800px;top:374.600px;width:375.400px"></div>
<div class="vr" style="left:656px;top:319px;height:112.700px"></div>
<div class="vr" style="left:1069px;top:319px;height:112.700px"></div>
<svg style="left:0;top:0" width="1736" height="828" viewBox="0 0 1736 828" fill="none"><path d="M1146.5,399.8C1148.2,400.5 1153.1,402.8 1156.6,403.9C1160.1,405.0 1164.7,406.1 1167.6,406.2C1170.5,406.3 1171.2,406.2 1174.1,404.4C1177.0,402.6 1181.0,398.5 1185.2,395.6C1189.4,392.7 1194.4,389.5 1199.0,386.9C1203.6,384.3 1209.3,381.4 1212.8,380.2C1216.3,379.0 1217.7,379.7 1220.2,379.5C1222.7,379.3 1225.0,379.9 1227.6,379.0C1230.2,378.1 1233.2,376.4 1235.9,374.0C1238.7,371.6 1241.3,367.1 1244.1,364.7C1246.8,362.3 1249.8,360.0 1252.4,359.5C1255.0,359.0 1257.0,359.8 1259.8,361.5C1262.6,363.2 1266.4,367.4 1269.0,369.8C1271.6,372.2 1273.0,373.0 1275.5,375.8C1278.0,378.6 1281.2,383.2 1283.8,386.9C1286.4,390.6 1289.0,395.9 1291.2,397.9C1293.4,399.9 1294.1,398.7 1296.7,398.8C1299.3,398.9 1303.3,398.8 1306.6,398.6C1309.9,398.4 1314.2,398.6 1316.7,397.7C1319.2,396.8 1319.9,395.6 1321.3,393.3C1322.7,391.0 1323.8,387.3 1325.0,384.1C1326.2,380.9 1327.5,376.8 1328.7,374.0C1329.9,371.2 1331.2,368.8 1332.4,367.1C1333.6,365.4 1334.1,364.1 1336.1,363.6C1338.1,363.1 1340.7,363.8 1344.4,364.3C1348.1,364.8 1353.8,366.7 1358.2,366.6C1362.7,366.5 1367.4,364.5 1371.1,363.8C1374.8,363.1 1377.8,362.5 1380.3,362.6C1382.8,362.7 1383.9,363.2 1385.9,364.3C1387.9,365.4 1390.2,367.5 1392.3,368.9C1394.4,370.3 1395.9,372.1 1398.8,372.9C1401.7,373.7 1405.7,373.4 1409.8,373.5C1413.9,373.6 1420.5,373.1 1423.6,373.5C1426.7,373.9 1426.5,374.7 1428.2,375.8C1429.9,376.9 1432.0,378.5 1433.8,380.4C1435.6,382.2 1437.7,384.9 1439.3,386.9C1440.9,388.9 1442.8,391.7 1443.5,392.6" stroke="#3a3f45" stroke-width="1.150" stroke-linecap="round"/></svg>

<!-- list cards -->
<div class="card" style="left:245px;top:466px;width:609.500px;height:420px"></div>
<div class="card" style="left:870px;top:466px;width:610px;height:420px"></div>
<div class="hr" style="left:246px;top:522px;width:607.500px"></div>
<div class="hr" style="left:871px;top:522px;width:608px"></div>
<div class="cust" style="left:754.200px"></div>
<div class="cust" style="left:1378.500px"></div>
<svg style="left:762.800px;top:489.100px" width="10.400" height="10.400" viewBox="0 0 10.400 10.400" fill="none" stroke="#212529" stroke-width="1.150"><rect x=".6" y=".6" width="3.500" height="3.500" rx=".9"/><rect x="6.300" y=".6" width="3.500" height="3.500" rx=".9"/><rect x=".6" y="6.300" width="3.500" height="3.500" rx=".9"/><rect x="6.300" y="6.300" width="3.500" height="3.500" rx=".9"/></svg>
<svg style="left:1387.200px;top:489.100px" width="10.400" height="10.400" viewBox="0 0 10.400 10.400" fill="none" stroke="#212529" stroke-width="1.150"><rect x=".6" y=".6" width="3.500" height="3.500" rx=".9"/><rect x="6.300" y=".6" width="3.500" height="3.500" rx=".9"/><rect x=".6" y="6.300" width="3.500" height="3.500" rx=".9"/><rect x="6.300" y="6.300" width="3.500" height="3.500" rx=".9"/></svg>
<div class="ibox" style="left:260.900px;top:537.3px"></div>
<svg style="left:272.5px;top:549.3px" width="19.600" height="18.800" viewBox="0 0 19.600 18.800" fill="none" stroke="#6c757d" stroke-width="1.350" stroke-linejoin="round"><path d="M9.800.9l8.200 3.300v9.600l-8.200 4.100-8.200-4.100V4.200z"/><path d="M1.600 4.200l8.200 3.500 8.200-3.500M9.800 7.700v10.200"/></svg>
<div class="ibox" style="left:885px;top:537.3px"></div>
<svg style="left:899.3px;top:549.4px" width="14.600" height="18.800" viewBox="0 0 14.600 18.800" fill="none" stroke="#6c757d" stroke-width="1.400" stroke-linecap="round"><rect x=".8" y=".8" width="13" height="17.200" rx="2.300"/><path d="M4 5.800h6.600M4 9.400h6.600M4 13h3.600"/></svg>
<div class="hr" style="left:260.900px;top:593.5px;width:578.700px"></div>
<div class="hr" style="left:885px;top:593.5px;width:578.700px"></div>
<div class="ibox" style="left:260.900px;top:607.3px"></div>
<svg style="left:272.5px;top:619.3px" width="19.600" height="18.800" viewBox="0 0 19.600 18.800" fill="none" stroke="#6c757d" stroke-width="1.350" stroke-linejoin="round"><path d="M9.800.9l8.200 3.300v9.600l-8.200 4.100-8.200-4.100V4.200z"/><path d="M1.600 4.200l8.200 3.500 8.200-3.500M9.800 7.700v10.200"/></svg>
<div class="ibox" style="left:885px;top:607.3px"></div>
<svg style="left:899.3px;top:619.4px" width="14.600" height="18.800" viewBox="0 0 14.600 18.800" fill="none" stroke="#6c757d" stroke-width="1.400" stroke-linecap="round"><rect x=".8" y=".8" width="13" height="17.200" rx="2.300"/><path d="M4 5.800h6.600M4 9.400h6.600M4 13h3.600"/></svg>
<div class="hr" style="left:260.900px;top:663.5px;width:578.700px"></div>
<div class="hr" style="left:885px;top:663.5px;width:578.700px"></div>
<div class="ibox" style="left:260.900px;top:677.3px"></div>
<svg style="left:272.5px;top:689.3px" width="19.600" height="18.800" viewBox="0 0 19.600 18.800" fill="none" stroke="#6c757d" stroke-width="1.350" stroke-linejoin="round"><path d="M9.800.9l8.200 3.300v9.600l-8.200 4.100-8.200-4.100V4.200z"/><path d="M1.600 4.200l8.200 3.500 8.200-3.500M9.800 7.700v10.200"/></svg>
<div class="ibox" style="left:885px;top:677.3px"></div>
<svg style="left:899.3px;top:689.4px" width="14.600" height="18.800" viewBox="0 0 14.600 18.800" fill="none" stroke="#6c757d" stroke-width="1.400" stroke-linecap="round"><rect x=".8" y=".8" width="13" height="17.200" rx="2.300"/><path d="M4 5.800h6.600M4 9.400h6.600M4 13h3.600"/></svg>
<div class="hr" style="left:260.900px;top:733.5px;width:578.700px"></div>
<div class="hr" style="left:885px;top:733.5px;width:578.700px"></div>
<div class="ibox" style="left:260.900px;top:747.3px"></div>
<svg style="left:272.5px;top:759.3px" width="19.600" height="18.800" viewBox="0 0 19.600 18.800" fill="none" stroke="#6c757d" stroke-width="1.350" stroke-linejoin="round"><path d="M9.800.9l8.200 3.300v9.600l-8.200 4.100-8.200-4.100V4.200z"/><path d="M1.600 4.200l8.200 3.500 8.200-3.500M9.800 7.700v10.200"/></svg>
<div class="ibox" style="left:885px;top:747.3px"></div>
<svg style="left:899.3px;top:759.4px" width="14.600" height="18.800" viewBox="0 0 14.600 18.800" fill="none" stroke="#6c757d" stroke-width="1.400" stroke-linecap="round"><rect x=".8" y=".8" width="13" height="17.200" rx="2.300"/><path d="M4 5.800h6.600M4 9.400h6.600M4 13h3.600"/></svg>
<div class="hr" style="left:260.900px;top:803.5px;width:578.700px"></div>
<div class="hr" style="left:885px;top:803.5px;width:578.700px"></div>
<div class="ibox" style="left:260.900px;top:817.3px"></div>
<svg style="left:272.5px;top:829.3px" width="19.600" height="18.800" viewBox="0 0 19.600 18.800" fill="none" stroke="#6c757d" stroke-width="1.350" stroke-linejoin="round"><path d="M9.800.9l8.200 3.300v9.600l-8.200 4.100-8.200-4.100V4.200z"/><path d="M1.600 4.200l8.200 3.500 8.200-3.500M9.800 7.700v10.200"/></svg>
<div class="ibox" style="left:885px;top:817.3px"></div>
<svg style="left:899.3px;top:829.4px" width="14.600" height="18.800" viewBox="0 0 14.600 18.800" fill="none" stroke="#6c757d" stroke-width="1.400" stroke-linecap="round"><rect x=".8" y=".8" width="13" height="17.200" rx="2.300"/><path d="M4 5.800h6.600M4 9.400h6.600M4 13h3.600"/></svg>
<svg style="left:490.400px;top:683.800px" width="11.400" height="10" viewBox="0 0 11.400 10" fill="none" stroke="#adb5bd" stroke-width="1"><rect x=".5" y="1.500" width="10.400" height="8" rx="1.500"/><path d="M.5 3.500h10.400M8 6.300h1.300"/></svg>
<span class="badge" style="left:770.3px;top:547.2px;width:68.3px">0.00976 Eth</span>
<span class="badge" style="left:770.3px;top:617.2px;width:68.3px">0.00854 Eth</span>
<span class="badge" style="left:770.3px;top:687.2px;width:68.3px">0.00148 Eth</span>
<span class="badge" style="left:775.8px;top:757.2px;width:62.8px">0.0207 Eth</span>
<span class="badge" style="left:770.3px;top:827.2px;width:68.3px">0.01422 Eth</span>
<span class="badge" style="left:1400.2px;top:547.2px;width:63.5px">0.0091 Eth</span>
<span class="badge" style="left:1425.6px;top:617.2px;width:38.1px">0 Eth</span>
<span class="badge" style="left:1394.7px;top:687.2px;width:69.0px">0.00373 Eth</span>
<span class="badge" style="left:1394.7px;top:757.2px;width:69.0px">0.00822 Eth</span>
<span class="badge" style="left:1400.2px;top:827.2px;width:63.5px">0.0335 Eth</span>

<span class="t" id="t0" style="left:244.4px;top:17.4px;font-size:11.7px;color:#6c757d;letter-spacing:-0.30px;">ETH Price:</span>
<span class="t" id="t1" style="left:300.2px;top:17.4px;font-size:11.7px;color:#0784c3;letter-spacing:-0.13px;">$3,042.95</span>
<span class="t" id="t2" style="left:353.4px;top:17.4px;font-size:11.7px;color:#00a186;letter-spacing:-0.27px;">(+0.34%)</span>
<span class="t" id="t3" style="left:430.7px;top:17.4px;font-size:11.7px;color:#6c757d;letter-spacing:-0.47px;">Gas:</span>
<span class="t" id="t4" style="left:456.2px;top:17.4px;font-size:11.7px;color:#0784c3;letter-spacing:-0.22px;">0.364 Gwei</span>
<span class="t" id="t5" style="left:923.6px;top:62.0px;font-size:13px;color:#0784c3;letter-spacing:0.19px;"><i class="c">首页</i></span>
<span class="t" id="t6" style="left:971.9px;top:62.0px;font-size:13px;color:#212529;letter-spacing:0.23px;"><i class="c">区块链</i></span>
<span class="t" id="t7" style="left:1049.4px;top:62.0px;font-size:13px;color:#212529;letter-spacing:0.09px;"><i class="c">代币</i></span>
<span class="t" id="t8" style="left:1114.7px;top:62.0px;font-size:13px;color:#212529;letter-spacing:0.14px;">NFTs</span>
<span class="t" id="t9" style="left:1183.7px;top:62.0px;font-size:13px;color:#212529;letter-spacing:0.29px;"><i class="c">资源</i></span>
<span class="t" id="t10" style="left:1248.4px;top:62.0px;font-size:13px;color:#212529;letter-spacing:0.24px;"><i class="c">程序编写员</i></span>
<span class="t" id="t11" style="left:1353.4px;top:62.0px;font-size:13px;color:#212529;letter-spacing:0.39px;"><i class="c">更多</i></span>
<span class="t" id="t12" style="left:1441.7px;top:62.0px;font-size:13px;color:#212529;letter-spacing:0.54px;"><i class="c">登录</i></span>
<span class="t" id="t13" style="left:282.2px;top:61.0px;font-size:17.8px;color:#21325b;font-family:'DejaVu Sans','Liberation Sans',sans-serif;letter-spacing:1.20px;-webkit-text-stroke:.35px #21325b;">Etherscan</span>
<span class="t" id="t14" style="left:244.6px;top:147.0px;font-size:19px;color:#ffffff;letter-spacing:-1.00px;"><i class="c">以太坊区块链浏览器</i></span>
<span class="t" id="t15" style="left:259.1px;top:192.0px;font-size:13.6px;color:#212529;letter-spacing:0.26px;"><i class="c">全部筛选</i></span>
<span class="t" id="t16" style="left:396.2px;top:192.0px;font-size:13.6px;color:#7c858d;letter-spacing:0.09px;"><i class="c">请输入地址</i> / <i class="c">交易哈希</i> / <i class="c">区块编号</i> / <i class="c">代币</i> / ENS</span>
<span class="t" id="t17" style="left:244.2px;top:234.8px;font-size:13px;color:#d0d5db;font-weight:bold;letter-spacing:-0.41px;">Sponsored:</span>
<span class="t" id="t18" style="left:340.1px;top:234.8px;font-size:13px;color:#dfe3e8;font-weight:bold;letter-spacing:-0.16px;">Whale.io</span>
<span class="t" id="t19" style="left:391.3px;top:234.8px;font-size:13px;color:#d0d5db;letter-spacing:-0.06px;">: Claim 77K Worth of Bonuses! 22% Cashback &amp; ETH Available!</span>
<span class="t" id="t20" style="left:781.4px;top:234.8px;font-size:13px;color:#0784c3;font-weight:bold;letter-spacing:-0.37px;">Play Now!</span>
<span class="t" id="t21" style="left:292.7px;top:321.0px;font-size:11px;color:#6c757d;letter-spacing:0.34px;"><i class="c">以太币价格</i></span>
<span class="t" id="t22" style="left:292.7px;top:338.9px;font-size:13.4px;color:#212529;letter-spacing:0.07px;">$3,042.95</span>
<span class="t" id="t23" style="left:356.1px;top:338.9px;font-size:13.4px;color:#6c757d;letter-spacing:-0.05px;">@ 0.034089 <i class="c">比特币</i></span>
<span class="t" id="t24" style="left:476.1px;top:340.0px;font-size:12px;color:#00a186;letter-spacing:-0.28px;">(+0.34%)</span>
<span class="t" id="t25" style="left:292.7px;top:396.4px;font-size:11px;color:#6c757d;letter-spacing:0.70px;"><i class="c">市值</i></span>
<span class="t" id="t26" style="left:292.7px;top:414.3px;font-size:13.4px;color:#212529;letter-spacing:0.03px;">$367,270,629,108.00</span>
<span class="t" id="t27" style="left:706.9px;top:321.0px;font-size:11px;color:#6c757d;letter-spacing:0.60px;"><i class="c">交易</i></span>
<span class="t" id="t28" style="left:706.9px;top:338.9px;font-size:13.4px;color:#212529;letter-spacing:0.10px;">3,123.07 M</span>
<span class="t" id="t29" style="left:777.4px;top:338.9px;font-size:13.4px;color:#6c757d;letter-spacing:-0.38px;">(13.2 TPS)</span>
<span class="t" id="t30" style="left:965.2px;top:321.2px;font-size:10.9px;color:#6c757d;letter-spacing:-0.05px;">MED GAS PRICE</span>
<span class="t" id="t31" style="left:938.4px;top:338.9px;font-size:13.4px;color:#212529;letter-spacing:0.12px;">0.364 Gwei</span>
<span class="t" id="t32" style="left:1009.8px;top:338.9px;font-size:13.4px;color:#6c757d;letter-spacing:-0.16px;">($0.02)</span>
<span class="t" id="t33" style="left:707.2px;top:396.6px;font-size:10.9px;color:#6c757d;letter-spacing:0.05px;">LAST FINALIZED BLOCK</span>
<span class="t" id="t34" style="left:707.2px;top:414.3px;font-size:13.4px;color:#212529;letter-spacing:0.19px;">23960817</span>
<span class="t" id="t35" style="left:952.8px;top:396.6px;font-size:10.9px;color:#6c757d;letter-spacing:-0.01px;">LAST SAFE BLOCK</span>
<span class="t" id="t36" style="left:989.3px;top:414.3px;font-size:13.4px;color:#212529;letter-spacing:0.28px;">23960849</span>
<span class="t" id="t37" style="left:1087.9px;top:321.2px;font-size:10.9px;color:#6c757d;letter-spacing:0.07px;">TRANSACTION HISTORY IN 14 DAYS</span>
<span class="t" id="t38" style="left:1087.9px;top:347.0px;font-size:11px;color:#5c646c;letter-spacing:0.28px;">2 000k</span>
<span class="t" id="t39" style="left:1087.9px;top:405.9px;font-size:11px;color:#5c646c;letter-spacing:0.28px;">1 200k</span>
<span class="t" id="t40" style="left:1129.3px;top:419.6px;font-size:11px;color:#5c646c;letter-spacing:-0.01px;">Nov 22</span>
<span class="t" id="t41" style="left:1277.4px;top:419.6px;font-size:11px;color:#5c646c;letter-spacing:0.06px;">Nov 29</span>
<span class="t" id="t42" style="left:1429.7px;top:419.6px;font-size:11px;color:#5c646c;letter-spacing:-0.05px;">Dec 6</span>
<span class="t" id="t43" style="left:260.0px;top:487.4px;font-size:13.6px;color:#212529;letter-spacing:0.18px;"><i class="c">最新区块</i></span>
<span class="t" id="t44" style="left:884.3px;top:487.4px;font-size:13.6px;color:#212529;letter-spacing:0.18px;"><i class="c">最新交易</i></span>
<span class="t" id="t45" style="left:777.0px;top:488.1px;font-size:11.2px;color:#212529;letter-spacing:0.22px;">Customize</span>
<span class="t" id="t46" style="left:1401.4px;top:488.1px;font-size:11.2px;color:#212529;letter-spacing:0.22px;">Customize</span>
<span class="t" id="t47" style="left:310.8px;top:542.2px;font-size:13px;color:#0784c3;letter-spacing:0.18px;">23960881</span>
<span class="t" id="t48" style="left:310.8px;top:563.1px;font-size:11.4px;color:#6c757d;letter-spacing:0.19px;">14 <i class="c">秒前</i></span>
<span class="t" id="t49" style="left:460.1px;top:542.0px;font-size:13px;color:#212529;letter-spacing:0.34px;"><i class="c">矿工</i></span>
<span class="t" id="t50" style="left:490.7px;top:542.2px;font-size:13px;color:#0784c3;letter-spacing:0.08px;">BuilderNet</span>
<span class="t" id="t51" style="left:460.1px;top:562.0px;font-size:13px;color:#0784c3;letter-spacing:0.03px;">218 <i class="c">交易</i></span>
<span class="t" id="t52" style="left:515.4px;top:563.1px;font-size:11.4px;color:#6c757d;letter-spacing:0.03px;"><i class="c">于</i> 12 <i class="c">秒内</i></span>
<span class="t" id="t53" style="left:310.8px;top:612.2px;font-size:13px;color:#0784c3;letter-spacing:0.18px;">23960880</span>
<span class="t" id="t54" style="left:310.8px;top:633.1px;font-size:11.4px;color:#6c757d;letter-spacing:0.19px;">26 <i class="c">秒前</i></span>
<span class="t" id="t55" style="left:460.1px;top:612.0px;font-size:13px;color:#212529;letter-spacing:0.34px;"><i class="c">矿工</i></span>
<span class="t" id="t56" style="left:490.7px;top:612.2px;font-size:13px;color:#0784c3;letter-spacing:0.11px;">Titan Builder</span>
<span class="t" id="t57" style="left:460.1px;top:632.0px;font-size:13px;color:#0784c3;letter-spacing:0.03px;">277 <i class="c">交易</i></span>
<span class="t" id="t58" style="left:515.4px;top:633.1px;font-size:11.4px;color:#6c757d;letter-spacing:0.03px;"><i class="c">于</i> 12 <i class="c">秒内</i></span>
<span class="t" id="t59" style="left:310.8px;top:682.2px;font-size:13px;color:#0784c3;letter-spacing:0.18px;">23960879</span>
<span class="t" id="t60" style="left:310.8px;top:703.1px;font-size:11.4px;color:#6c757d;letter-spacing:0.19px;">38 <i class="c">秒前</i></span>
<span class="t" id="t61" style="left:460.1px;top:682.0px;font-size:13px;color:#212529;letter-spacing:0.34px;"><i class="c">矿工</i></span>
<span class="t" id="t62" style="left:505.5px;top:682.2px;font-size:13px;color:#0784c3;letter-spacing:-0.43px;">Fee Recipient: …</span>
<span class="t" id="t63" style="left:460.1px;top:702.0px;font-size:13px;color:#0784c3;letter-spacing:0.06px;">42 <i class="c">交易</i></span>
<span class="t" id="t64" style="left:507.9px;top:703.1px;font-size:11.4px;color:#6c757d;letter-spacing:0.01px;"><i class="c">于</i> 12 <i class="c">秒内</i></span>
<span class="t" id="t65" style="left:310.8px;top:752.2px;font-size:13px;color:#0784c3;letter-spacing:0.18px;">23960878</span>
<span class="t" id="t66" style="left:310.8px;top:773.1px;font-size:11.4px;color:#6c757d;letter-spacing:0.19px;">50 <i class="c">秒前</i></span>
<span class="t" id="t67" style="left:460.1px;top:752.0px;font-size:13px;color:#212529;letter-spacing:0.34px;"><i class="c">矿工</i></span>
<span class="t" id="t68" style="left:490.7px;top:752.2px;font-size:13px;color:#0784c3;letter-spacing:0.08px;">BuilderNet</span>
<span class="t" id="t69" style="left:460.1px;top:772.0px;font-size:13px;color:#0784c3;letter-spacing:0.03px;">339 <i class="c">交易</i></span>
<span class="t" id="t70" style="left:515.3px;top:773.1px;font-size:11.4px;color:#6c757d;letter-spacing:0.09px;"><i class="c">于</i> 12 <i class="c">秒内</i></span>
<span class="t" id="t71" style="left:310.8px;top:822.2px;font-size:13px;color:#0784c3;letter-spacing:0.18px;">23960877</span>
<span class="t" id="t72" style="left:310.8px;top:843.1px;font-size:11.4px;color:#6c757d;letter-spacing:1.83px;">1 <i class="c">分前</i></span>
<span class="t" id="t73" style="left:460.1px;top:822.0px;font-size:13px;color:#212529;letter-spacing:0.34px;"><i class="c">矿工</i></span>
<span class="t" id="t74" style="left:490.7px;top:822.2px;font-size:13px;color:#0784c3;letter-spacing:-0.78px;">MEV Builder: 0x00…</span>
<span class="t" id="t75" style="left:460.1px;top:842.0px;font-size:13px;color:#0784c3;letter-spacing:0.03px;">301 <i class="c">交易</i></span>
<span class="t" id="t76" style="left:515.4px;top:843.1px;font-size:11.4px;color:#6c757d;letter-spacing:0.03px;"><i class="c">于</i> 12 <i class="c">秒内</i></span>
<span class="t" id="t77" style="left:935.3px;top:542.2px;font-size:13px;color:#0784c3;letter-spacing:-0.02px;">0x3154df93f5a…</span>
<span class="t" id="t78" style="left:935.3px;top:563.1px;font-size:11.4px;color:#6c757d;letter-spacing:0.15px;">14 <i class="c">秒前</i></span>
<span class="t" id="t79" style="left:1134.9px;top:541.9px;font-size:13px;color:#212529;letter-spacing:0.06px;"><i class="c">发送方</i></span>
<span class="t" id="t80" style="left:1178.0px;top:542.0px;font-size:13px;color:#0784c3;letter-spacing:0.13px;">0xdadB0d80...24f783711</span>
<span class="t" id="t81" style="left:1134.9px;top:562.0px;font-size:13px;color:#212529;letter-spacing:0.06px;"><i class="c">接收方</i></span>
<span class="t" id="t82" style="left:1178.0px;top:562.2px;font-size:13px;color:#0784c3;letter-spacing:0.05px;">0xe688b84b...2CDB71127</span>
<span class="t" id="t83" style="left:935.3px;top:612.2px;font-size:13px;color:#0784c3;letter-spacing:-0.12px;">0xca5760d839…</span>
<span class="t" id="t84" style="left:935.3px;top:633.1px;font-size:11.4px;color:#6c757d;letter-spacing:0.15px;">14 <i class="c">秒前</i></span>
<span class="t" id="t85" style="left:1134.9px;top:611.9px;font-size:13px;color:#212529;letter-spacing:0.06px;"><i class="c">发送方</i></span>
<span class="t" id="t86" style="left:1178.0px;top:612.0px;font-size:13px;color:#0784c3;letter-spacing:0.01px;">0x490ca13D...59e26e1B4</span>
<span class="t" id="t87" style="left:1134.9px;top:632.0px;font-size:13px;color:#212529;letter-spacing:0.06px;"><i class="c">接收方</i></span>
<span class="t" id="t88" style="left:1178.0px;top:632.2px;font-size:13px;color:#0784c3;letter-spacing:0.04px;">0x1495bc9e...0cF0C05ea</span>
<span class="t" id="t89" style="left:935.3px;top:682.2px;font-size:13px;color:#0784c3;letter-spacing:-0.02px;">0x0bf68fe8649…</span>
<span class="t" id="t90" style="left:935.3px;top:703.1px;font-size:11.4px;color:#6c757d;letter-spacing:0.15px;">14 <i class="c">秒前</i></span>
<span class="t" id="t91" style="left:1134.9px;top:681.9px;font-size:13px;color:#212529;letter-spacing:0.06px;"><i class="c">发送方</i></span>
<span class="t" id="t92" style="left:1178.0px;top:682.0px;font-size:13px;color:#0784c3;letter-spacing:0.01px;">0x1B6dBA57...77Dbf75DA</span>
<span class="t" id="t93" style="left:1134.9px;top:702.0px;font-size:13px;color:#212529;letter-spacing:0.06px;"><i class="c">接收方</i></span>
<span class="t" id="t94" style="left:1178.0px;top:702.2px;font-size:13px;color:#0784c3;letter-spacing:0.14px;">0x66a9893c...5e1dBA8Af</span>
<span class="t" id="t95" style="left:935.3px;top:752.2px;font-size:13px;color:#0784c3;letter-spacing:-0.11px;">0x183e88f3240…</span>
<span class="t" id="t96" style="left:935.3px;top:773.1px;font-size:11.4px;color:#6c757d;letter-spacing:0.15px;">14 <i class="c">秒前</i></span>
<span class="t" id="t97" style="left:1134.9px;top:751.9px;font-size:13px;color:#212529;letter-spacing:0.06px;"><i class="c">发送方</i></span>
<span class="t" id="t98" style="left:1178.0px;top:752.0px;font-size:13px;color:#0784c3;letter-spacing:-0.04px;">0xB7C40916...ddb4cFD7D</span>
<span class="t" id="t99" style="left:1134.9px;top:772.0px;font-size:13px;color:#212529;letter-spacing:0.06px;"><i class="c">接收方</i></span>
<span class="t" id="t100" style="left:1178.0px;top:772.2px;font-size:13px;color:#0784c3;letter-spacing:0.04px;">0x48f9bE7A...155Ce0333</span>
<span class="t" id="t101" style="left:935.3px;top:822.2px;font-size:13px;color:#0784c3;letter-spacing:-0.92px;">0x0220dee22b…</span>
<span class="t" id="t102" style="left:935.3px;top:843.1px;font-size:11.4px;color:#6c757d;letter-spacing:0.15px;">14 <i class="c">秒前</i></span>
<span class="t" id="t103" style="left:1134.9px;top:821.9px;font-size:13px;color:#212529;letter-spacing:0.06px;"><i class="c">发送方</i></span>
<span class="t" id="t104" style="left:1178.0px;top:822.0px;font-size:13px;color:#0784c3;letter-spacing:-0.09px;">0x3ee0f30C...6E0D3D856</span>
<span class="t" id="t105" style="left:1134.9px;top:842.0px;font-size:13px;color:#212529;letter-spacing:0.06px;"><i class="c">接收方</i></span>
<span class="t" id="t106" style="left:1178.0px;top:842.2px;font-size:13px;color:#0784c3;letter-spacing:-0.07px;">0x95222290...5CC4BAfe5</span>

<!-- floating buttons -->
<div class="abs" style="left:1690.900px;top:329px;width:32px;height:32px;border-radius:50%;background:rgba(255,255,255,.78);box-shadow:0 2px 8px rgba(0,0,0,.1)"></div>
<svg style="left:1699.500px;top:337.500px" width="15" height="15" viewBox="0 0 15 15" fill="none" stroke="#4a4f55" stroke-width="1.100"><rect x="1" y="2.500" width="4.200" height="4.200"/><rect x="1" y="9.300" width="4.200" height="4.200"/><rect x="8.200" y="9.300" width="4.200" height="4.200"/><path d="M10.300 1.200c.3 1.700.9 2.300 2.600 2.600-1.700.3-2.300.9-2.600 2.600-.3-1.700-.9-2.300-2.600-2.600 1.700-.3 2.300-.9 2.600-2.600z" fill="#4a4f55" stroke-width=".6"/></svg>
<div class="abs" style="left:1690.300px;top:370.800px;width:40px;height:31.800px;border-radius:16px 0 0 16px;background:#fff;box-shadow:0 2px 8px rgba(0,0,0,.1)"></div>
<div class="abs" style="left:1694.200px;top:373.600px;width:25.400px;height:25.400px;border-radius:50%;background:#f2a0b5"></div>
<span class="t" style="left:1698.700px;top:378.400px;font-size:9.200px;font-weight:bold;color:#fff">中</span>
<span class="t" style="left:1707.600px;top:384.600px;font-size:10.200px;font-weight:bold;color:#fff">A</span>
<svg style="left:1694.200px;top:373.600px" width="25.400" height="25.400" viewBox="0 0 25.400 25.400" fill="none" stroke="#fff" stroke-width="1.200" stroke-linecap="round"><path d="M14.800 6.500c2.200 0 3.300 1.200 3.300 3.300M10.500 19c-2.200 0-3.300-1.200-3.300-3.300"/></svg>
<div class="abs" style="left:1676px;top:416.700px;width:36.200px;height:36.300px;border-radius:8.500px;background:#615eeb"></div>
<svg style="left:1676.100px;top:416.700px" width="36" height="36" viewBox="0 0 36 36"><g fill="#fff" stroke="#fff" stroke-width=".9" stroke-linejoin="round"><path d="M12.300 11.300l2.300-3.900 3.300-.5 1.900 2.600h6.400l1.800 2.900-1.300 1.800H14.200z"/><path d="M6.300 15.500l2.400-2.900 1.900.5 5.800 12-1.600 2.100h-4l-2.600-2.900 1.600-2.400z"/><path d="M16.900 27.500l6.600-10.900 3.200-.3 3.200 4.600-2.100 2.300h-3l-3.900 6.700-2.200.3z"/></g><g fill="#cfc9f6"><path d="M15.300 10.800l1.200-1.900h2.300l1 1.500-.7 1.300h-3.200z"/><path d="M10 16.500l3.500 7.400-1.200 1.600-1.600-1.900 1-2-2.600-3.800z"/><path d="M20.500 25.500l4-6.800 1.500-.1-2 3.500z"/></g></svg>

<!-- scrollbar -->
<div id="sbar" class="abs"></div>
<svg style="left:1729.500px;top:7px" width="12" height="7" viewBox="0 0 12 7"><path d="M0 6.500L4.200.5 8.400 6.500z" fill="#8b8b8b"/></svg>
<div id="thumb" class="abs"></div>
</body>
</html>
